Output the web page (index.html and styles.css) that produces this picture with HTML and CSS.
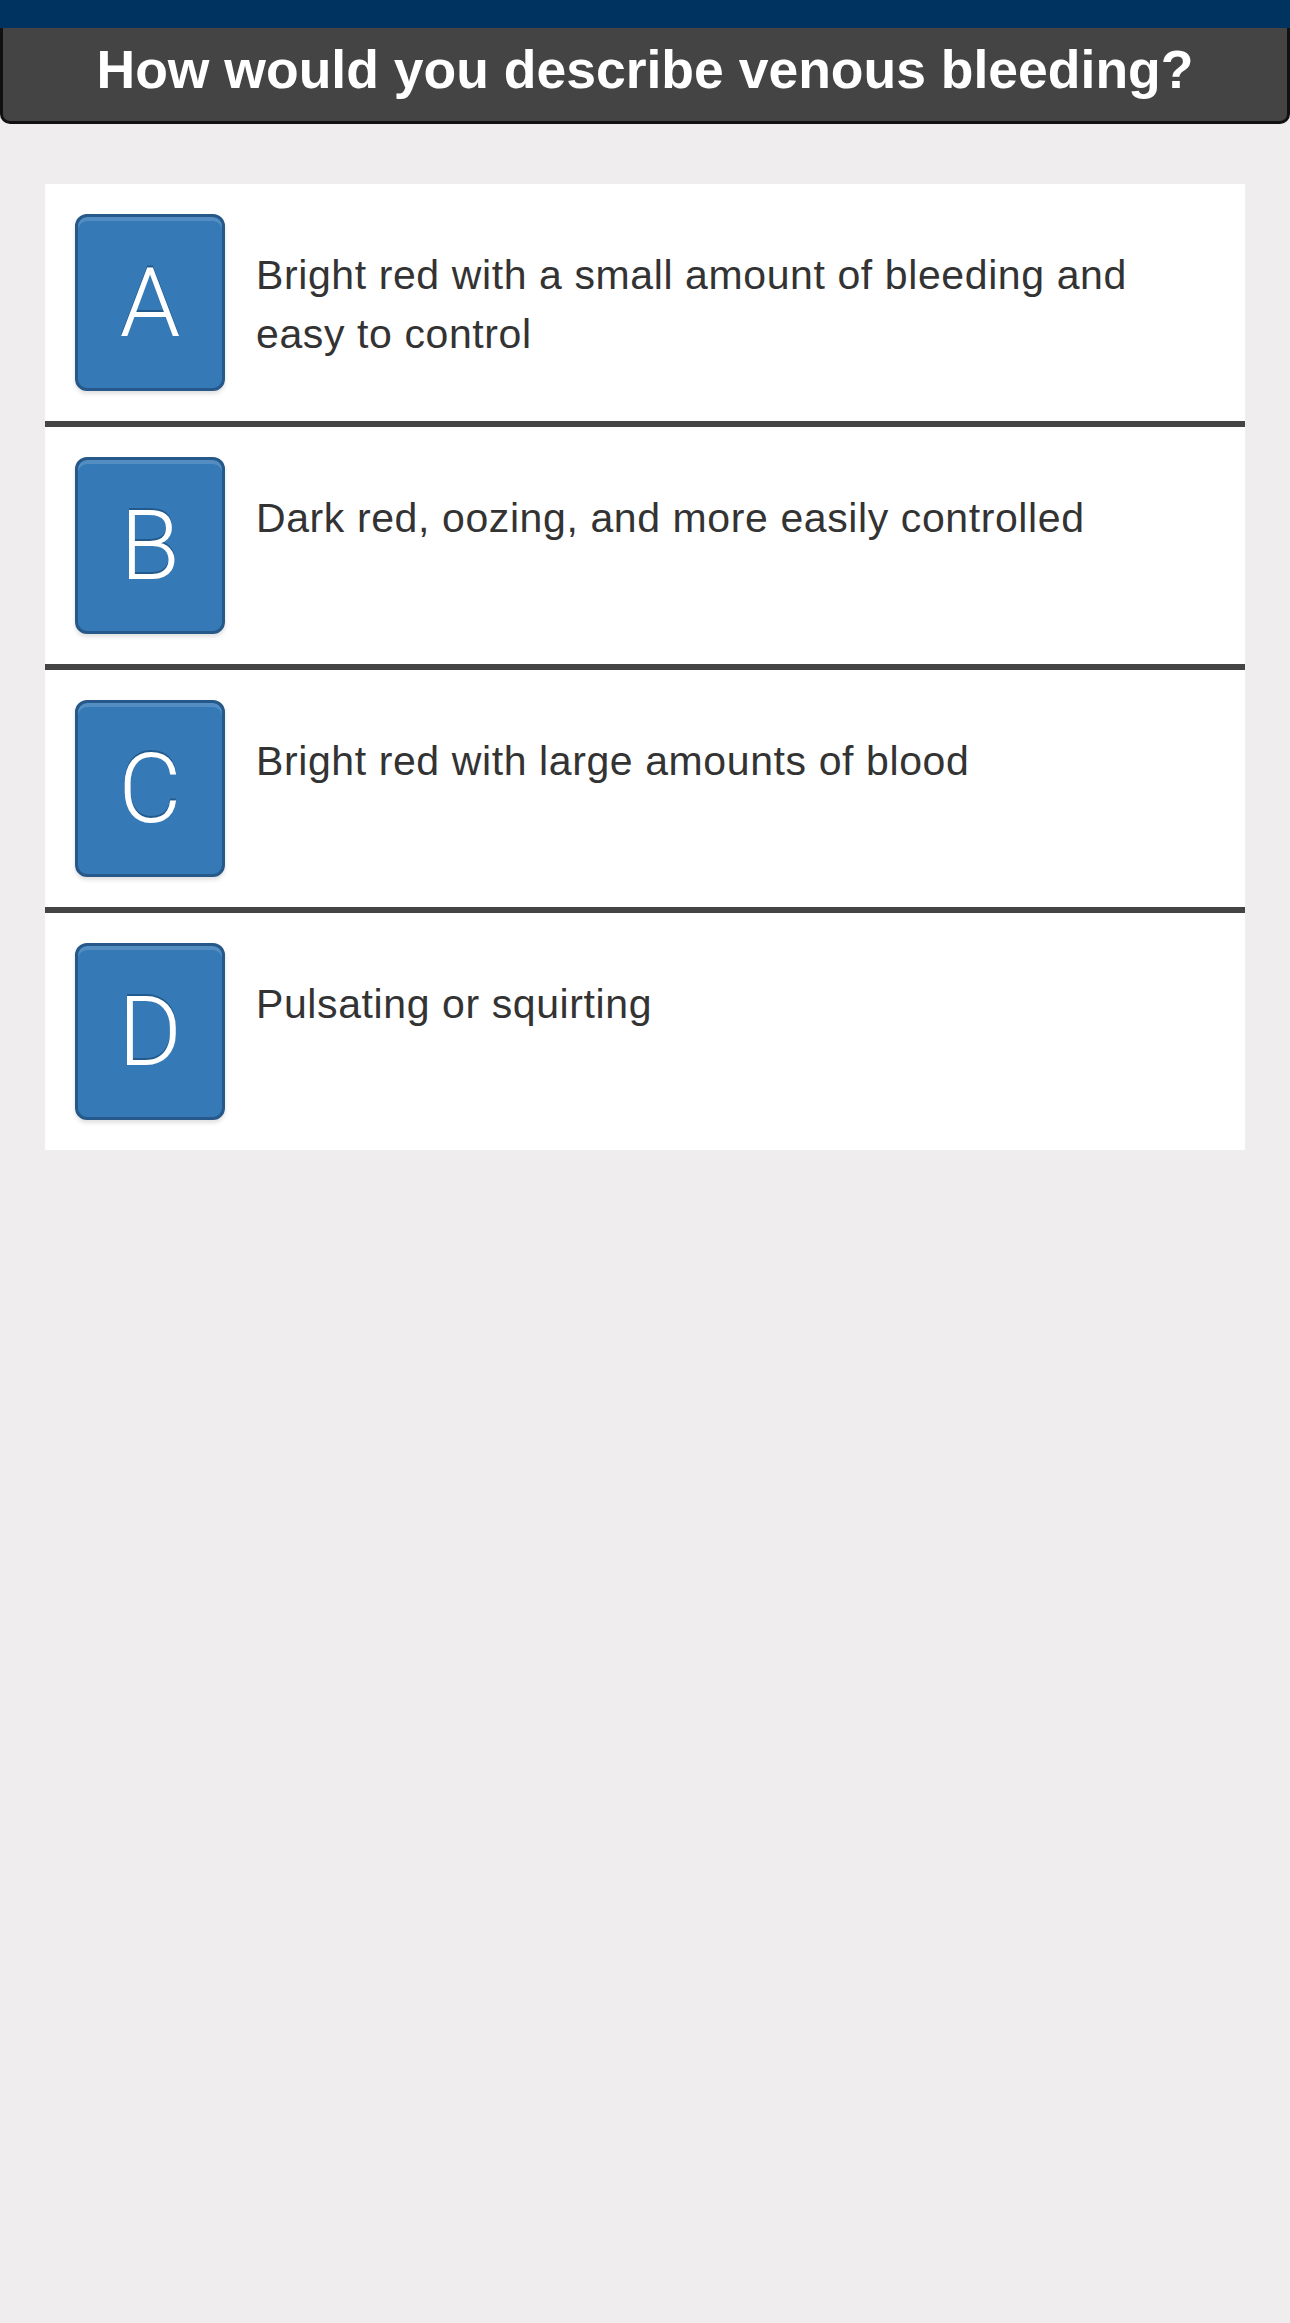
FILE: index.html
```html
<!DOCTYPE html>
<html lang="en">
<head>
    <meta charset="UTF-8">
    <meta name="viewport" content="width=device-width, initial-scale=1.0">
    <title>Quiz</title>
    <link rel="stylesheet" href="styles.css">
</head>
<body>
    <div class="topbar"></div>
    <div class="question">
        <h1>How would you describe venous bleeding?</h1>
    </div>

    <div class="answers">
        <div class="answer">
            <div class="letter">A</div>
            <div class="answer-text">Bright red with a small amount of bleeding and easy to control</div>
        </div>
        <div class="answer">
            <div class="letter">B</div>
            <div class="answer-text">Dark red, oozing, and more easily controlled</div>
        </div>
        <div class="answer">
            <div class="letter">C</div>
            <div class="answer-text">Bright red with large amounts of blood</div>
        </div>
        <div class="answer">
            <div class="letter">D</div>
            <div class="answer-text">Pulsating or squirting</div>
        </div>
    </div>
</body>
</html>
```

FILE: styles.css
```css
body {
    margin: 0;
    padding: 0;
    background-color: #efedee;
    font-family: "Liberation Sans", Arial, sans-serif;
}
.topbar {
    height: 28px;
    background-color: #003360;
}
.question {
    background-color: #444444;
    border: 3px solid #111111;
    border-top: none;
    border-radius: 0 0 10px 10px;
}
.question h1 {
    margin: 0;
    padding-bottom: 10px;
    color: #ffffff;
    font-size: 53.5px;
    font-weight: bold;
    line-height: 83px;
    text-align: center;
}
.answers {
    margin: 60px 45px 0;
    background-color: #ffffff;
}
.answer {
    display: flex;
    gap: 31px;
    padding: 30px;
    border-bottom: 6px solid #444444;
}
.answer:last-child {
    border-bottom: none;
}
.letter {
    flex: none;
    display: flex;
    align-items: center;
    justify-content: center;
    box-sizing: border-box;
    width: 150px;
    height: 177px;
    background-color: #357ab7;
    border: 3px solid #26598a;
    border-radius: 12px;
    box-shadow: inset 0 4px 0 rgba(255, 255, 255, 0.15), 0 3px 4px rgba(0, 0, 0, 0.12);
    color: #ffffff;
    font-family: Roboto, "Liberation Sans", sans-serif;
    font-size: 97px;
    font-weight: 300;
    text-shadow: 0 -2px 0 rgba(10, 50, 90, 0.45);
}
.answer-text {
    padding-top: 32px;
    color: #333333;
    font-size: 41px;
    letter-spacing: 0.6px;
    line-height: 59px;
}
```
